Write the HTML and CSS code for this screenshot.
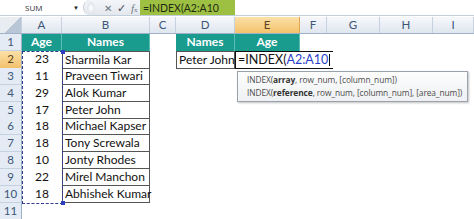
FILE: index.html
```html
<!DOCTYPE html>
<html>
<head>
    <title>INDEX</title>
    <link rel="stylesheet" href="styles.css">
</head>
<body>
    <div class="fbar">
        <div class="namebox"><span class="nb-text">SUM</span><span class="nb-arrow">&#9660;</span></div>
        <div class="fbtns">
            <span class="grip"></span>
            <span class="btn-x">&#10005;</span>
            <span class="btn-ok">&#10003;</span>
            <span class="btn-fx"><i>f</i><small>x</small></span>
        </div>
        <div class="finput"><span class="fgreen">=INDEX(A2:A10</span></div>
    </div>

    <div class="colhead">
        <div class="corner"></div>
        <div>A</div><div>B</div><div>C</div><div>D</div><div class="sel">E</div><div>F</div><div>G</div><div>H</div><div>I</div>
    </div>

    <div class="grid">
        <div class="row">
            <div class="rh">1</div><div class="c hd">Age</div><div class="c hd">Names</div><div></div><div class="c hd">Names</div><div class="c hd">Age</div><div></div><div></div><div></div><div></div>
        </div>
        <div class="row">
            <div class="rh sel">2</div><div class="c num">23</div><div class="c nm first">Sharmila Kar</div><div></div><div class="c nm first">Peter John</div>
            <div class="c edit"><span class="editbox">=INDEX(<span class="ref">A2:A10</span><span class="caret"></span></span></div><div></div><div></div><div></div><div></div>
        </div>
        <div class="row">
            <div class="rh">3</div><div class="c num">11</div><div class="c nm">Praveen Tiwari</div><div></div><div></div><div></div><div></div><div></div><div></div><div></div>
        </div>
        <div class="row">
            <div class="rh">4</div><div class="c num">29</div><div class="c nm">Alok Kumar</div><div></div><div></div><div></div><div></div><div></div><div></div><div></div>
        </div>
        <div class="row">
            <div class="rh">5</div><div class="c num">17</div><div class="c nm">Peter John</div><div></div><div></div><div></div><div></div><div></div><div></div><div></div>
        </div>
        <div class="row">
            <div class="rh">6</div><div class="c num">18</div><div class="c nm">Michael Kapser</div><div></div><div></div><div></div><div></div><div></div><div></div><div></div>
        </div>
        <div class="row">
            <div class="rh">7</div><div class="c num">18</div><div class="c nm">Tony Screwala</div><div></div><div></div><div></div><div></div><div></div><div></div><div></div>
        </div>
        <div class="row">
            <div class="rh">8</div><div class="c num">10</div><div class="c nm">Jonty Rhodes</div><div></div><div></div><div></div><div></div><div></div><div></div><div></div>
        </div>
        <div class="row">
            <div class="rh">9</div><div class="c num">22</div><div class="c nm">Mirel Manchon</div><div></div><div></div><div></div><div></div><div></div><div></div><div></div>
        </div>
        <div class="row">
            <div class="rh">10</div><div class="c num">18</div><div class="c nm">Abhishek Kumar</div><div></div><div></div><div></div><div></div><div></div><div></div><div></div>
        </div>
        <div class="row">
            <div class="rh">11</div><div></div><div></div><div></div><div></div><div></div><div></div><div></div><div></div><div></div>
        </div>

        <!-- marching ants round A2:A10 -->
        <div class="ants"><span class="h-top"></span><span class="h-bot"></span></div>

        <!-- function tip -->
        <div class="tip">
            <div>INDEX(<b>array</b>, row_num, [column_num])</div>
            <div>INDEX(<b>reference</b>, row_num, [column_num], [area_num])</div>
        </div>
    </div>
</body>
</html>
```

FILE: styles.css
```css
* {
    box-sizing: border-box;
}

body {
    margin: 0;
    width: 474px;
    height: 219px;
    overflow: hidden;
    background: #ffffff;
    font-family: Lato, "Liberation Sans", sans-serif;
}

:root {
    --cols: 22px 40px 88px 26px 59px 65px 27px 53px 53px 41px;
    --rowh: 16.9px;
}

/* FORMULA BAR */
.fbar {
    display: flex;
    height: 16px;
    border-bottom: 1px solid #c3cedb;
    margin-bottom: 1px;
}

.namebox {
    width: 83px;
    display: flex;
    align-items: center;
    background: #fff;
    font-family: "Open Sans", sans-serif;
    font-size: 8px;
    color: #333;
}

.nb-text {
    margin-left: 25px;
    flex: 1;
}

.nb-arrow {
    font-size: 6px;
    margin-right: 4px;
    color: #222;
}

.fbtns {
    width: 57px;
    display: flex;
    align-items: center;
    background: linear-gradient(#f4f6f9, #e3e8ee);
    border-left: 1px solid #c7d0da;
    border-radius: 7px 0 0 7px;
}

.grip {
    width: 8px;
    height: 12px;
    margin-left: 3px;
    border-radius: 50%;
    background: radial-gradient(#ffffff, #d2d9e2);
}

.btn-x {
    margin-left: 9px;
    font-size: 10px;
    color: #6b7684;
}

.btn-ok {
    margin-left: 5px;
    font-size: 11px;
    color: #3e4a57;
}

.btn-fx {
    margin-left: 5px;
    font-family: "Liberation Serif", serif;
    font-size: 11px;
    color: #707a86;
}

.btn-fx small {
    font-size: 7px;
}

.finput {
    flex: 1;
    background: #fff;
    display: flex;
}

.fgreen {
    width: 95px;
    background: #9dc043;
    color: #1f2a10;
    font-size: 10.5px;
    padding-left: 3px;
    line-height: 16px;
}

/* COLUMN HEADERS */
.colhead {
    display: grid;
    grid-template-columns: var(--cols);
    height: 17px;
    background: linear-gradient(#f6f8fb, #dfe6ef);
    border-bottom: 1px solid #9eb1c8;
}

.colhead div {
    border-right: 1px solid #c5d1de;
    text-align: center;
    font-size: 11.5px;
    line-height: 16px;
    color: #3d5676;
}

.colhead .sel {
    background: linear-gradient(#fbe0a8, #f3c26c);
    color: #5a4420;
    border-right-color: #e0a84a;
}

.colhead .corner {
    background: linear-gradient(135deg, #e9edf2 55%, #b9c6d6 56%);
}

/* GRID */
.grid {
    position: relative;
}

.row {
    display: grid;
    grid-template-columns: var(--cols);
    height: var(--rowh);
}

.rh {
    background: #e4ebf5;
    border-right: 1px solid #9eb1c8;
    border-bottom: 1px solid #c5d1de;
    text-align: center;
    font-size: 11.5px;
    line-height: 16px;
    color: #3d5676;
}

.rh.sel {
    background: linear-gradient(#fbe0a8, #f3c26c);
    color: #5a4420;
}

.c {
    font-size: 12px;
    line-height: 16px;
    color: #111;
    white-space: nowrap;
}

.hd {
    background: #199b8e;
    color: #fff;
    font-weight: bold;
    text-align: center;
    border-right: 1px solid #5dbdb3;
}

.num {
    text-align: center;
}

.nm {
    padding-left: 2px;
    border-left: 1px solid #555;
    border-right: 1px solid #555;
    border-bottom: 1px solid #555;
}

.nm.first {
    border-top: 1px solid #555;
}

.edit {
    position: relative;
}

.editbox {
    display: inline-block;
    height: 100%;
    padding-left: 2px;
    padding-right: 3px;
    border: 1px solid #111;
    border-right: none;
    background: #fff;
    font-size: 12.5px;
    position: relative;
    z-index: 1;
}

.ref {
    color: #2b3fc8;
}

.caret {
    display: inline-block;
    width: 1px;
    height: 12px;
    margin-left: 1px;
    vertical-align: -2px;
    background: #111;
}

/* OVERLAYS */
.ants {
    position: absolute;
    left: 22px;
    top: var(--rowh);
    width: 41px;
    height: calc(var(--rowh) * 9 + 1px);
    border: 1px dashed #2e3c92;
}

.ants span {
    position: absolute;
    right: -3px;
    width: 4px;
    height: 4px;
    background: #2e3fc0;
}

.ants .h-top {
    top: -2px;
}

.ants .h-bot {
    bottom: -2px;
}

.tip {
    position: absolute;
    left: 237px;
    top: 37px;
    width: 231px;
    height: 31px;
    padding: 1px 0 0 9px;
    background: linear-gradient(#fdfdfd, #eef0f3);
    border: 1px solid #9aa3ad;
    box-shadow: 1px 1px 2px rgba(0, 0, 0, 0.25);
    font-family: "Open Sans", sans-serif;
    font-size: 8.4px;
    line-height: 13px;
    white-space: nowrap;
    letter-spacing: -0.1px;
    color: #4d4d4d;
    z-index: 2;
}

.tip b {
    color: #333;
}
```
